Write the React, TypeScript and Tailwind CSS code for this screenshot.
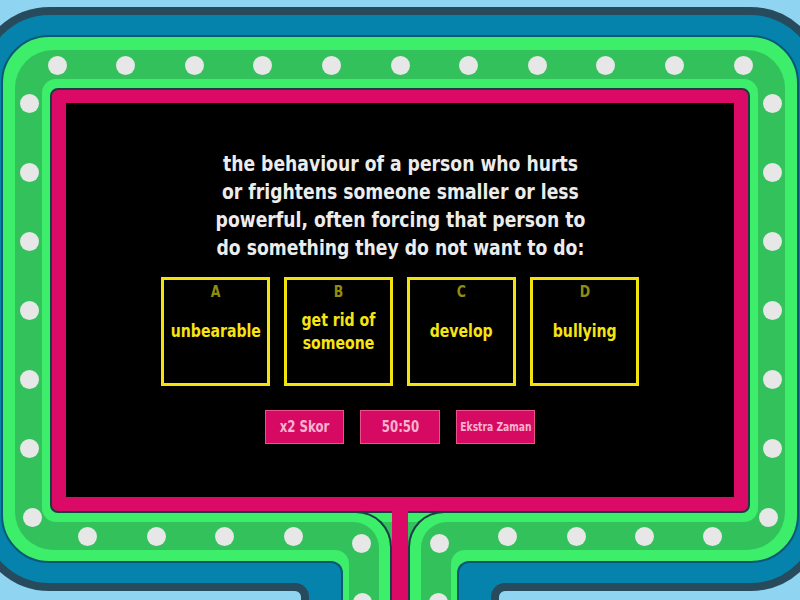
import React from 'react'

const font = "font-['Liberation_Sans_Narrow','DejaVu_Sans_Condensed','Liberation_Sans',sans-serif]"

const answers = [
    { letter: 'A', text: ['unbearable'] },
    { letter: 'B', text: ['get rid of', 'someone'] },
    { letter: 'C', text: ['develop'] },
    { letter: 'D', text: ['bullying'] },
]

// dot centres on the mid green band
const dots: [number, number][] = [
    ...Array.from({ length: 11 }, (_, i) => [57 + 68.6 * i, 65] as [number, number]),
    ...Array.from({ length: 6 }, (_, i) => [29, 103 + 69 * i] as [number, number]),
    ...Array.from({ length: 6 }, (_, i) => [772, 103 + 69 * i] as [number, number]),
    [32, 517], [768, 517],
    [87, 536], [156, 536], [224, 536], [293, 536],
    [507, 536], [576, 536], [644, 536], [712, 536],
    [361, 543], [439, 543], [362, 602], [438, 602],
]

function Dot({ x, y }: { x: number, y: number }) {
    return (
        <div
            className="absolute w-[19px] h-[19px] rounded-full bg-[#e7e7e7]"
            style={{ left: x - 9.5, top: y - 9.5 }}
        />
    )
}

export default function App() {
    return (
        <div className={`relative w-[800px] h-[600px] overflow-hidden bg-[#8fd4f0] pt-[7px] ${font}`}>
            {/* outer blue frame */}
            <div className="ml-[-25px] w-[850px] h-[584px] rounded-[75px] border-[8px] border-[#274b5d] bg-[#0583ad] pt-[20px] px-[18px] pb-[20px]">
                <div className="h-full rounded-[48px] border-2 border-[#0b5874] bg-[#3cee6a] pt-[13px] px-[12px] pb-[11px]">
                    <div className="h-full rounded-[38px] bg-[#33c15b] pt-[29px] px-[27px] pb-[28px]">
                        <div className="h-full rounded-[14px] bg-[#3cee6a] pt-[9px] px-[8px] pb-[9px]">
                            <div className="h-full rounded-[8px] border-2 border-[#1d3b45] bg-[#db0a66] pt-[13px] px-[14px] pb-[14px]">
                                <div className="h-full bg-black flex flex-col items-center pt-[47px]">
                                    <p className="scale-x-[0.87] text-[22px] leading-[28px] font-bold text-[#ececec] text-center">
                                        the behaviour of a person who hurts<br />
                                        or frightens someone smaller or less<br />
                                        powerful, often forcing that person to<br />
                                        do something they do not want to do:
                                    </p>

                                    <div className="flex gap-[14px] mt-[15px]">
                                        {answers.map((a) => (
                                            <div
                                                key={a.letter}
                                                className="w-[109px] h-[109px] border-[3px] border-[#f3e30c] flex flex-col items-center"
                                            >
                                                <div className="h-[24px] pt-[3px] text-[16px] leading-[18px] font-bold text-[#8f8c12] scale-x-[0.87]">
                                                    {a.letter}
                                                </div>
                                                <div className="flex-1 flex items-center justify-center pb-[26px] text-[18px] leading-[23px] font-bold text-[#f7e512] text-center">
                                                    <span className="inline-block scale-x-[0.87] whitespace-nowrap">
                                                        {a.text.map((t, i) => (
                                                            <React.Fragment key={t}>
                                                                {i > 0 && <br />}
                                                                {t}
                                                            </React.Fragment>
                                                        ))}
                                                    </span>
                                                </div>
                                            </div>
                                        ))}
                                    </div>

                                    <div className="flex gap-[16px] mt-[24px]">
                                        <button className="w-[79px] h-[34px] flex items-center justify-center bg-[#d60a62] border border-[#e9528d] text-[15px] font-bold text-[#f6b2cf]">
                                            <span className="shrink-0 scale-x-[0.87]">x2 Skor</span>
                                        </button>
                                        <button className="w-[80px] h-[34px] flex items-center justify-center bg-[#d60a62] border border-[#e9528d] text-[15px] font-bold text-[#f6b2cf]">
                                            <span className="shrink-0 scale-x-[0.87]">50:50</span>
                                        </button>
                                        <button className="w-[79px] h-[34px] flex items-center justify-center bg-[#d60a62] border border-[#e9528d] text-[12px] font-bold text-[#f6b2cf]">
                                            <span className="shrink-0 scale-x-[0.85] whitespace-nowrap">Ekstra Zaman</span>
                                        </button>
                                    </div>
                                </div>
                            </div>
                        </div>
                    </div>
                </div>
            </div>

            {/* stand: bands bending down round the pink column */}
            <div className="absolute left-[220px] top-[511px] w-[172px] h-[110px] rounded-tr-[36px] border-t-2 border-r-2 border-[#1d3b45] bg-[#3cee6a] pt-[9px] pr-[11px]">
                <div className="h-full rounded-tr-[26px] bg-[#33c15b] pt-[28px] pr-[30px]">
                    <div className="h-full rounded-tr-[14px] bg-[#3cee6a] pt-[11px] pr-[6px]">
                        <div className="h-full rounded-tr-[12px] border-t-2 border-r-2 border-[#0b5874] bg-[#0583ad] pt-[20px] pr-[32px]">
                            <div className="h-full rounded-tr-[14px] border-t-[8px] border-r-[8px] border-[#274b5d] bg-[#8fd4f0]" />
                        </div>
                    </div>
                </div>
            </div>
            <div className="absolute left-[408px] top-[511px] w-[172px] h-[110px] rounded-tl-[36px] border-t-2 border-l-2 border-[#1d3b45] bg-[#3cee6a] pt-[9px] pl-[11px]">
                <div className="h-full rounded-tl-[26px] bg-[#33c15b] pt-[28px] pl-[30px]">
                    <div className="h-full rounded-tl-[14px] bg-[#3cee6a] pt-[11px] pl-[6px]">
                        <div className="h-full rounded-tl-[12px] border-t-2 border-l-2 border-[#0b5874] bg-[#0583ad] pt-[20px] pl-[32px]">
                            <div className="h-full rounded-tl-[14px] border-t-[8px] border-l-[8px] border-[#274b5d] bg-[#8fd4f0]" />
                        </div>
                    </div>
                </div>
            </div>
            <div className="absolute left-[392px] top-[509px] w-[16px] h-[100px] bg-[#db0a66]" />

            {dots.map(([x, y], i) => (
                <Dot key={i} x={x} y={y} />
            ))}
        </div>
    )
}
